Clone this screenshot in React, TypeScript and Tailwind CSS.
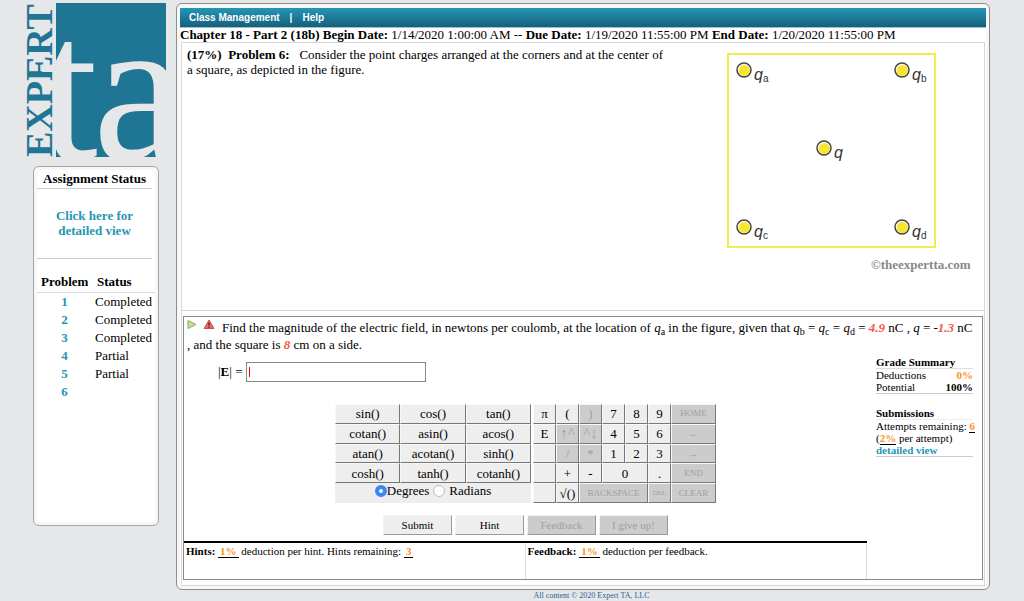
import clsx from "clsx";
import type { ReactNode } from "react";

type KeyType = {
  label: string;
  name?: string;
  off?: boolean;
  className?: string;
};

const PROBLEMS = ["Completed", "Completed", "Completed", "Partial", "Partial", ""];

const FUNCTION_KEYS = [
  "sin()", "cos()", "tan()",
  "cotan()", "asin()", "acos()",
  "atan()", "acotan()", "sinh()",
  "cosh()", "tanh()", "cotanh()",
];

const NUMBER_KEYS: KeyType[] = [
  { label: "π", name: "pi" },
  { label: "(" },
  { label: ")", off: true },
  { label: "7" },
  { label: "8" },
  { label: "9" },
  { label: "HOME", off: true, className: "text-[9px]" },
  { label: "E" },
  { label: "↑^", name: "superscript", off: true, className: "text-[15px]" },
  { label: "^↓", name: "subscript", off: true, className: "text-[15px]" },
  { label: "4" },
  { label: "5" },
  { label: "6" },
  { label: "←", name: "left", off: true, className: "text-[11px]" },
  { label: "", name: "blank" },
  { label: "/", off: true },
  { label: "*", off: true },
  { label: "1" },
  { label: "2" },
  { label: "3" },
  { label: "→", name: "right", off: true, className: "text-[11px]" },
  { label: "", name: "blank" },
  { label: "+" },
  { label: "-" },
  { label: "0", className: "col-span-2 text-[13px]" },
  { label: "." },
  { label: "END", off: true, className: "text-[9px]" },
  { label: "", name: "blank" },
  { label: "√()", name: "square root" },
  { label: "BACKSPACE", off: true, className: "col-span-3 text-[9px]" },
  { label: "DEL", off: true, className: "text-[7px]" },
  { label: "CLEAR", off: true, className: "text-[9px]" },
];

const CHARGES = [
  { x: 17, y: 17, sub: "a" },
  { x: 175, y: 17, sub: "b" },
  { x: 97, y: 95, sub: "" },
  { x: 17, y: 174, sub: "c" },
  { x: 175, y: 174, sub: "d" },
];

const Logo = () => (
  <svg
    width="140"
    height="154"
    viewBox="0 0 140 154"
    className="ml-[26px] block overflow-visible"
    role="img"
    aria-label="Expert TA"
  >
    <rect x="30" y="0" width="110" height="154" fill="#1f7594" />
    <g fontFamily="'Liberation Serif', serif">
      <text transform="translate(26 154) rotate(-90)" fontSize="38" fontWeight="700" fill="#1f7594">
        EXPERT
      </text>
      <g fontSize="208" fill="#e5e7e9">
        <text x="14" y="156">t</text>
        <text x="67" y="156">a</text>
      </g>
    </g>
  </svg>
);

const Figure = () => (
  <svg width="248" height="222" viewBox="0 0 248 222" className="block" role="img" aria-label="Square of point charges">
    <rect x="1" y="1" width="207" height="193" fill="#fff" stroke="#f3ea50" strokeWidth="2" />
    {CHARGES.map(({ x, y, sub }) => (
      <g key={`${x}-${y}`} fontFamily="'Liberation Sans', sans-serif" fill="#333">
        <circle cx={x} cy={y} r="7" fill="#fff" stroke="#444" strokeWidth="1.5" />
        <circle cx={x + 0.3} cy={y + 0.5} r="5.6" fill="#f7e52f" />
        <text x={x + 10} y={y + 10} fontSize="16" fontStyle="italic">
          q
          <tspan fontSize="10" fontStyle="normal" dy="2">
            {sub}
          </tspan>
        </text>
      </g>
    ))}
    <text x="144" y="216" fontFamily="'Liberation Serif', serif" fontSize="13" fontWeight="700" fill="#888">
      ©theexpertta.com
    </text>
  </svg>
);

const Key = ({ label, name, off, className }: KeyType) => (
  <button
    type="button"
    disabled={off}
    aria-label={name}
    className={clsx(
      "flex items-center justify-center overflow-hidden whitespace-nowrap border border-t-[#f8f8f8] border-l-[#f8f8f8] border-r-[#777] border-b-[#777] leading-none",
      off ? "bg-[#ccc] text-[#a0a0a0]" : "bg-[#eee]",
      className ?? "text-[13px]",
    )}
  >
    {label}
  </button>
);

const ActionButton = ({ children, off }: { children: ReactNode; off?: boolean }) => (
  <button
    type="button"
    disabled={off}
    className={clsx(
      "h-5 w-[69px] border border-t-[#f4f4f4] border-l-[#f4f4f4] border-r-[#999] border-b-[#999] text-[11px] leading-none",
      off ? "bg-[#ccc] text-[#a0a0a0]" : "bg-[#eee]",
    )}
  >
    {children}
  </button>
);

const Amount = ({ children }: { children: ReactNode }) => (
  <span className="border-b border-black px-0.5 font-bold text-[#f7941d]">{children}</span>
);

const Q = ({ sub }: { sub?: string }) => (
  <>
    <i>q</i>
    {sub && <sub className="text-[10px]">{sub}</sub>}
  </>
);

const Value = ({ children }: { children: ReactNode }) => <b className="italic text-[#f9594b]">{children}</b>;

const Sidebar = () => (
  <aside className="w-[176px] shrink-0 pt-[3px]">
    <Logo />
    <div className="ml-[33px] mt-[9px] min-h-[360px] w-[126px] rounded-md border border-[#a5a5a5] bg-[#f7f7f7] p-[3px]">
      <div className="min-h-[352px] bg-white text-[13px] leading-[18px]">
        <h2 className="mr-[3px] border-b border-[#ccc] text-center font-bold">Assignment Status</h2>
        <p className="mr-[3px] border-b border-[#ccc] pt-[19px] pb-5 text-center font-bold leading-[15px]">
          <a href="#detail" className="text-[#2596b4]">
            Click here for
            <br />
            detailed view
          </a>
        </p>
        <table className="mt-[14px] w-full">
          <thead>
            <tr className="border-b border-[#ddd] text-left">
              <th className="w-[55px] pb-px pl-1">Problem</th>
              <th className="pb-px pl-[5px]">Status</th>
            </tr>
          </thead>
          <tbody>
            {PROBLEMS.map((status, index) => (
              <tr key={index}>
                <td className="text-center font-bold">
                  <a href={`#problem-${index + 1}`} className="text-[#2596b4]">
                    {index + 1}
                  </a>
                </td>
                <td className="pl-[3px]">{status}</td>
              </tr>
            ))}
          </tbody>
        </table>
      </div>
    </div>
  </aside>
);

const Keypad = () => (
  <div className="mt-[22px] flex justify-center gap-0.5">
    <div className="grid h-[99px] w-[196px] grid-cols-3 grid-rows-5 bg-[#eee]">
      {FUNCTION_KEYS.map((label) => (
        <Key key={label} label={label} />
      ))}
      <div className="col-span-3 flex items-start justify-center text-[13px] leading-4">
        <label className="flex items-center">
          <input
            type="radio"
            name="angle"
            defaultChecked
            className="size-3 appearance-none rounded-full border border-[#aaa] bg-white checked:border-4 checked:border-[#3b86f7]"
          />
          Degrees
        </label>
        <label className="ml-1 flex items-center gap-1">
          <input
            type="radio"
            name="angle"
            className="size-3 appearance-none rounded-full border border-[#bbb] bg-white checked:border-4 checked:border-[#3b86f7]"
          />
          Radians
        </label>
      </div>
    </div>
    <div className="grid h-[99px] grid-cols-[repeat(6,23px)_45px] grid-rows-5">
      {NUMBER_KEYS.map((item, index) => (
        <Key key={index} {...item} />
      ))}
    </div>
  </div>
);

const GradeSummary = () => (
  <div className="mt-px w-[115px] shrink-0 pr-[9px] pl-[9px] text-[11px] leading-3">
    <h3 className="border-b border-[#ddd] font-bold">Grade Summary</h3>
    <dl className="grid grid-cols-[1fr_auto] border-b border-[#ccc]">
      <dt>Deductions</dt>
      <dd className="text-right font-bold text-[#f7941d]">0%</dd>
      <dt>Potential</dt>
      <dd className="text-right font-bold">100%</dd>
    </dl>
    <h3 className="mt-[13px] border-b border-[#eee] font-bold">Submissions</h3>
    <div className="border-b border-[#ccc]">
      <p className="whitespace-nowrap">
        Attempts remaining: <span className="border-b border-black font-bold text-[#f7941d]">6</span>
      </p>
      <p>
        (<span className="border-b border-black font-bold text-[#f7941d]">2%</span> per attempt)
      </p>
      <a href="#submissions" className="font-bold text-[#2596b4]">
        detailed view
      </a>
    </div>
  </div>
);

const AnswerPanel = () => (
  <section className="mx-px mt-[5px] mb-[5px] border border-[#888]">
    <p className="min-h-[38px] pt-0.5 pl-[3px] text-[13px] leading-[17px] [&_sub]:leading-none">
      <svg width="10" height="11" viewBox="0 0 10 11" className="mr-1.5 inline-block align-top" aria-hidden="true">
        <path d="M1 1.5 L9 5.5 L1 9.5 Z" fill="#c5dd98" stroke="#8bad5c" />
      </svg>
      <svg
        width="12"
        height="11"
        viewBox="0 0 12 11"
        className="mr-[7px] inline-block align-top"
        aria-label="warning"
        role="img"
      >
        <path d="M6 1 L11 9.5 H1 Z" fill="#e96a6a" stroke="#d35050" strokeLinejoin="round" />
        <path d="M6 3.5 V6.5 M6 7.5 V8.7" stroke="#5c2020" strokeWidth="1.4" />
      </svg>
      Find the magnitude of the electric field, in newtons per coulomb, at the location of <Q sub="a" /> in the figure,
      given that <Q sub="b" /> = <Q sub="c" /> = <Q sub="d" /> = <Value>4.9</Value> nC , <Q /> = -<Value>1.3</Value> nC
      ,&nbsp;and the square is <Value>8</Value> cm on a side.
    </p>
    <div className="flex">
      <div className="min-w-0 flex-1">
        <div className="mt-[7px] ml-[34px] flex items-center text-[13px]">
          <label htmlFor="answer" className="mr-1">
            |<b>E</b>| =
          </label>
          <div className="relative">
            <input
              id="answer"
              type="text"
              autoComplete="off"
              className="block h-5 w-[180px] border border-[#888] bg-white px-0.5 caret-[#ff0000]"
            />
            <span className="pointer-events-none absolute top-[5px] left-[3px] h-[10px] w-px bg-[#ff0000]" />
          </div>
        </div>
        <Keypad />
        <div className="mt-3 flex justify-center gap-[3px]">
          <ActionButton>Submit</ActionButton>
          <ActionButton>Hint</ActionButton>
          <ActionButton off>Feedback</ActionButton>
          <ActionButton off>I give up!</ActionButton>
        </div>
        <div className="mt-[6px] grid min-h-[38px] grid-cols-2 border-t-2 border-black text-[11px] leading-[17px]">
          <p className="border-r border-[#ddd] pl-0.5">
            <b>Hints:</b> <Amount>1%</Amount> deduction per hint. Hints remaining: <Amount>3</Amount>
          </p>
          <p className="border-r border-[#ddd] pl-0.5">
            <b>Feedback:</b> <Amount>1%</Amount> deduction per feedback.
          </p>
        </div>
      </div>
      <GradeSummary />
    </div>
  </section>
);

const App = () => {
  return (
    <div className="flex min-h-screen bg-[#e5e7e9] font-['Liberation_Serif','Times_New_Roman',serif] text-black">
      <Sidebar />
      <div className="mr-[34px] min-w-0 flex-1 pt-[3px]">
        <main className="rounded-md border border-[#8e8e8e] bg-[#f7f7f7] p-[3px] pt-1">
          <div className="bg-white">
            <nav className="flex h-5 items-center gap-[10px] border-b border-[#9dc3d0] bg-linear-to-b from-[#2596b8] to-[#15607a] pl-[9px] font-['Liberation_Sans',Arial,sans-serif] text-[10px] font-bold text-white">
              <a href="#class">Class Management</a>
              <span>|</span>
              <a href="#help">Help</a>
            </nav>
            <p className="text-[13px] leading-[14px]">
              <b>Chapter 18 - Part 2 (18b) Begin Date:</b> 1/14/2020 1:00:00 AM -- <b>Due Date:</b> 1/19/2020 11:55:00 PM{" "}
              <b>End Date:</b> 1/20/2020 11:55:00 PM
            </p>
            <div className="mx-px border border-[#d5d5d5]">
              <section className="flex min-h-[268px] justify-between border-b border-[#d5d5d5]">
                <p className="w-[490px] pt-1 pl-[5px] text-[13px] leading-[15px]">
                  <b>(17%)&nbsp; Problem 6:</b> &nbsp; Consider the point charges arranged at the corners and at the
                  center of a square, as depicted in the figure.
                </p>
                <div className="mr-[9px] pt-[10px]">
                  <Figure />
                </div>
              </section>
              <AnswerPanel />
            </div>
          </div>
        </main>
        <footer className="pl-[17px] text-center text-[8px] leading-3 text-[#2a5f94]">
          All content © 2020 Expert TA, LLC
        </footer>
      </div>
    </div>
  );
};

export default App;
